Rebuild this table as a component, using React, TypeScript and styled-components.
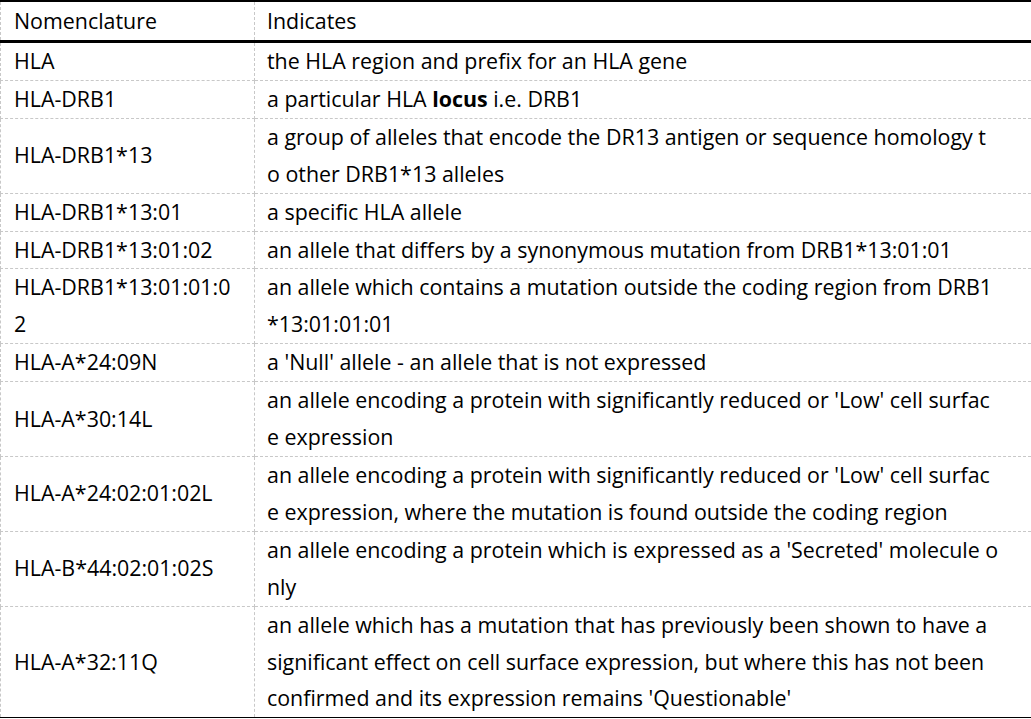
import React from "react";
import styled, { createGlobalStyle } from "styled-components";

const Global = createGlobalStyle`
  html, body { margin: 0; padding: 0; background: #ffffff; }
  body { font-family: "Open Sans", "Noto Sans", "Liberation Sans", sans-serif; color: #000; }
`;

const Table = styled.table`
  width: 1031px;
  table-layout: fixed;
  border-collapse: collapse;
  border-top: 2px solid #000;
  font-size: 21.4px;
  line-height: 36.9px;
`;

const Col = styled.col<{ $w?: number }>`
  width: ${(p) => (p.$w ? `${p.$w}px` : "auto")};
`;

const HeadCell = styled.th<{ $first?: boolean }>`
  text-align: left;
  font-weight: 400;
  padding: 0 13px 0 ${(p) => (p.$first ? 13 : 12)}px;
  height: 38px;
  border-bottom: 3px solid #000;
  border-left: ${(p) => (p.$first ? "1px dashed #c8c8c8" : "none")};
  border-right: ${(p) => (p.$first ? "1px dashed #c8c8c8" : "none")};
  white-space: nowrap;
`;

const Cell = styled.td<{ $first?: boolean; $last?: boolean }>`
  padding: 0 13px 0 ${(p) => (p.$first ? 13 : 12)}px;
  vertical-align: middle;
  border-bottom: ${(p) => (p.$last ? "1px solid #000" : "1px dashed #c8c8c8")};
  border-left: ${(p) => (p.$first ? "1px dashed #c8c8c8" : "none")};
  border-right: ${(p) => (p.$first ? "1px dashed #c8c8c8" : "none")};
`;

const Line = styled.span`
  display: block;
  white-space: nowrap;
`;

const Bold = styled.b`
  font-weight: 700;
`;

type Row = { name: React.ReactNode[]; desc: React.ReactNode[] };

const rows: Row[] = [
  { name: ["HLA"], desc: ["the HLA region and prefix for an HLA gene"] },
  {
    name: ["HLA-DRB1"],
    desc: [
      <>
        a particular HLA <Bold>locus</Bold> i.e. DRB1
      </>,
    ],
  },
  {
    name: ["HLA-DRB1*13"],
    desc: [
      "a group of alleles that encode the DR13 antigen or sequence homology t",
      "o other DRB1*13 alleles",
    ],
  },
  { name: ["HLA-DRB1*13:01"], desc: ["a specific HLA allele"] },
  {
    name: ["HLA-DRB1*13:01:02"],
    desc: ["an allele that differs by a synonymous mutation from DRB1*13:01:01"],
  },
  {
    name: ["HLA-DRB1*13:01:01:0", "2"],
    desc: [
      "an allele which contains a mutation outside the coding region from DRB1",
      "*13:01:01:01",
    ],
  },
  { name: ["HLA-A*24:09N"], desc: ["a 'Null' allele - an allele that is not expressed"] },
  {
    name: ["HLA-A*30:14L"],
    desc: [
      "an allele encoding a protein with significantly reduced or 'Low' cell surfac",
      "e expression",
    ],
  },
  {
    name: ["HLA-A*24:02:01:02L"],
    desc: [
      "an allele encoding a protein with significantly reduced or 'Low' cell surfac",
      "e expression, where the mutation is found outside the coding region",
    ],
  },
  {
    name: ["HLA-B*44:02:01:02S"],
    desc: [
      "an allele encoding a protein which is expressed as a 'Secreted' molecule o",
      "nly",
    ],
  },
  {
    name: ["HLA-A*32:11Q"],
    desc: [
      "an allele which has a mutation that has previously been shown to have a",
      "significant effect on cell surface expression, but where this has not been",
      "confirmed and its expression remains 'Questionable'",
    ],
  },
];

export default function App() {
  return (
    <>
      <Global />
      <Table>
        <colgroup>
          <Col $w={254} />
          <Col />
        </colgroup>
        <thead>
          <tr>
            <HeadCell $first>Nomenclature</HeadCell>
            <HeadCell>Indicates</HeadCell>
          </tr>
        </thead>
        <tbody>
          {rows.map((r, i) => {
            const last = i === rows.length - 1;
            return (
              <tr key={i}>
                <Cell $first $last={last}>
                  {r.name.map((n, j) => (
                    <Line key={j}>{n}</Line>
                  ))}
                </Cell>
                <Cell $last={last}>
                  {r.desc.map((d, j) => (
                    <Line key={j}>{d}</Line>
                  ))}
                </Cell>
              </tr>
            );
          })}
        </tbody>
      </Table>
    </>
  );
}
